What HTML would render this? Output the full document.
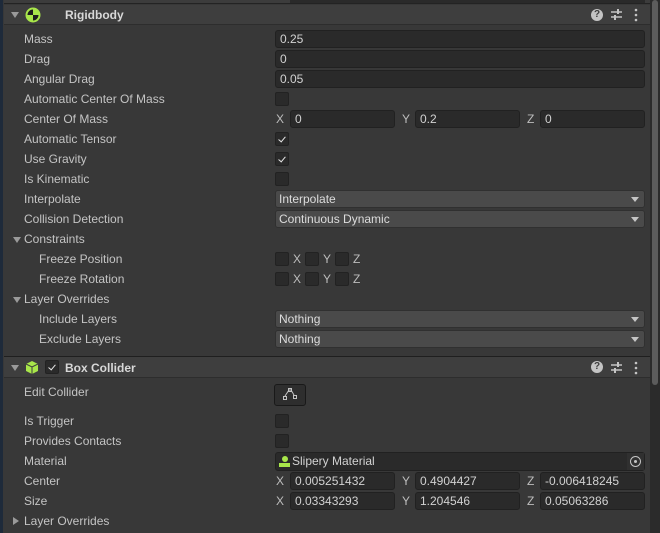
<!DOCTYPE html><html><head><style>
*{box-sizing:border-box;margin:0;padding:0}
body{width:660px;height:533px;background:#383838;font-family:"Liberation Sans",sans-serif;font-size:12px;color:#c4c4c4;position:relative;overflow:hidden}
.a{position:absolute}
.lbl{position:absolute;left:24px;height:20px;line-height:20px;white-space:nowrap}
.f{position:absolute;background:#2a2a2a;border:1px solid #212121;border-radius:3px;height:18px;line-height:16px;padding-left:4px;color:#d2d2d2;white-space:nowrap;overflow:hidden}
.dd{position:absolute;background:#4a4a4a;border:1px solid #303030;border-radius:3px;height:18px;line-height:16px;padding-left:3px;color:#dcdcdc;left:275px;width:370px}
.dd:after{content:"";position:absolute;right:5px;top:6px;border-left:4px solid transparent;border-right:4px solid transparent;border-top:5px solid #c4c4c4}
.cb{position:absolute;width:14px;height:14px;background:#2a2a2a;border:1px solid #222;border-radius:2px}
.ck:after{content:"";position:absolute;left:4px;top:2px;width:3px;height:6px;border-right:1.5px solid #e8e8e8;border-bottom:1.5px solid #e8e8e8;transform:rotate(40deg)}
.hd{position:absolute;left:4px;right:10px;height:20px;background:#3e3e3e;border-bottom:1px solid #2d2d2d}
.tri{position:absolute;width:0;height:0;border-left:4px solid transparent;border-right:4px solid transparent;border-top:6px solid #9a9a9a}
.xl{position:absolute;color:#bdbdbd;height:20px;line-height:20px}
</style></head><body>
<div class="a" style="left:0;top:0;width:3px;height:533px;background:#1e2a3a"></div>
<div class="a" style="left:650px;top:0;width:10px;height:533px;background:#2b2b2b"></div>
<div class="a" style="left:652px;top:0;width:6px;height:385px;background:#5c5c5c;border-radius:3px"></div>
<div class="a" style="left:4px;top:0;width:646px;height:4px;background:#3c3c3c;border-bottom:1px solid #232323"></div>
<div class="a" style="left:290px;top:0;width:355px;height:3px;background:#2a2a2a"></div>

<div class="hd" style="top:5px"></div>
<div class="tri" style="left:11px;top:12px"></div>
<svg class="a" style="left:25px;top:7px" width="16" height="16" viewBox="0 0 16 16"><circle cx="8" cy="8" r="6.5" fill="#1e1e1e" stroke="#a8e64a" stroke-width="2"/><path d="M8 2A6 6 0 0 1 14 8H8Z M8 8V14A6 6 0 0 1 2 8Z" fill="#a8e64a"/></svg>
<div class="a" style="left:65px;top:5px;line-height:20px;font-weight:bold;color:#d8d8d8">Rigidbody</div>
<div class="a" style="left:591px;top:9px;width:12px;height:12px;border-radius:6px;background:#c4c4c4;color:#3e3e3e;font-size:10px;font-weight:bold;text-align:center;line-height:12px">?</div>
<svg class="a" style="left:610px;top:8px" width="13" height="13"><path d="M1 4H12M1 9H12" stroke="#c4c4c4" stroke-width="1.5"/><path d="M8 1V6M5 7V12" stroke="#c4c4c4" stroke-width="2"/></svg>
<svg class="a" style="left:634px;top:8px" width="4" height="14"><circle cx="2" cy="2" r="1.3" fill="#c4c4c4"/><circle cx="2" cy="7" r="1.3" fill="#c4c4c4"/><circle cx="2" cy="12" r="1.3" fill="#c4c4c4"/></svg>

<div class="lbl" style="top:29px">Mass</div><div class="f" style="top:30px;left:275px;width:370px">0.25</div>
<div class="lbl" style="top:49px">Drag</div><div class="f" style="top:50px;left:275px;width:370px">0</div>
<div class="lbl" style="top:69px">Angular Drag</div><div class="f" style="top:70px;left:275px;width:370px">0.05</div>
<div class="lbl" style="top:89px">Automatic Center Of Mass</div><div class="cb" style="left:275px;top:92px"></div>
<div class="lbl" style="top:109px">Center Of Mass</div>
<div class="xl" style="left:276px;top:109px">X</div><div class="f" style="top:110px;left:290px;width:105px">0</div>
<div class="xl" style="left:402px;top:109px">Y</div><div class="f" style="top:110px;left:415px;width:105px">0.2</div>
<div class="xl" style="left:527px;top:109px">Z</div><div class="f" style="top:110px;left:540px;width:105px">0</div>
<div class="lbl" style="top:129px">Automatic Tensor</div><div class="cb ck" style="left:275px;top:132px"></div>
<div class="lbl" style="top:149px">Use Gravity</div><div class="cb ck" style="left:275px;top:152px"></div>
<div class="lbl" style="top:169px">Is Kinematic</div><div class="cb" style="left:275px;top:172px"></div>
<div class="lbl" style="top:189px">Interpolate</div><div class="dd" style="top:190px">Interpolate</div>
<div class="lbl" style="top:209px">Collision Detection</div><div class="dd" style="top:210px">Continuous Dynamic</div>
<div class="tri" style="left:13px;top:237px"></div><div class="lbl" style="top:229px">Constraints</div>
<div class="lbl" style="top:249px;left:39px">Freeze Position</div>
<div class="cb" style="left:275px;top:252px"></div><div class="xl" style="left:293px;top:249px">X</div>
<div class="cb" style="left:305px;top:252px"></div><div class="xl" style="left:323px;top:249px">Y</div>
<div class="cb" style="left:335px;top:252px"></div><div class="xl" style="left:353px;top:249px">Z</div>
<div class="lbl" style="top:269px;left:39px">Freeze Rotation</div>
<div class="cb" style="left:275px;top:272px"></div><div class="xl" style="left:293px;top:269px">X</div>
<div class="cb" style="left:305px;top:272px"></div><div class="xl" style="left:323px;top:269px">Y</div>
<div class="cb" style="left:335px;top:272px"></div><div class="xl" style="left:353px;top:269px">Z</div>
<div class="tri" style="left:13px;top:297px"></div><div class="lbl" style="top:289px">Layer Overrides</div>
<div class="lbl" style="top:309px;left:39px">Include Layers</div><div class="dd" style="top:310px">Nothing</div>
<div class="lbl" style="top:329px;left:39px">Exclude Layers</div><div class="dd" style="top:330px">Nothing</div>

<div class="a" style="left:4px;top:356px;width:646px;height:1px;background:#1f1f1f"></div>
<div class="hd" style="top:357px;height:21px"></div>
<div class="tri" style="left:11px;top:365px"></div>
<svg class="a" style="left:25px;top:360px" width="14" height="15" viewBox="0 0 14 15"><path d="M7 1L13 4V11L7 14L1 11V4Z" fill="#a8e64a"/><path d="M1 4L7 7L13 4M7 7V14" stroke="#3e3e3e" stroke-width="1" fill="none"/></svg>
<div class="cb ck" style="left:45px;top:360px"></div>
<div class="a" style="left:65px;top:358px;line-height:20px;font-weight:bold;color:#d8d8d8">Box Collider</div>
<div class="a" style="left:591px;top:361px;width:12px;height:12px;border-radius:6px;background:#c4c4c4;color:#3e3e3e;font-size:10px;font-weight:bold;text-align:center;line-height:12px">?</div>
<svg class="a" style="left:610px;top:361px" width="13" height="13"><path d="M1 4H12M1 9H12" stroke="#c4c4c4" stroke-width="1.5"/><path d="M8 1V6M5 7V12" stroke="#c4c4c4" stroke-width="2"/></svg>
<svg class="a" style="left:634px;top:361px" width="4" height="14"><circle cx="2" cy="2" r="1.3" fill="#c4c4c4"/><circle cx="2" cy="7" r="1.3" fill="#c4c4c4"/><circle cx="2" cy="12" r="1.3" fill="#c4c4c4"/></svg>

<div class="lbl" style="top:382px">Edit Collider</div>
<div class="a" style="left:274px;top:384px;width:32px;height:22px;background:#2e2e2e;border:1px solid #191919;border-radius:3px"></div>
<svg class="a" style="left:282px;top:387px" width="16" height="14"><path d="M3 9L7 3L9 3L12 8" stroke="#c4c4c4" fill="none"/><rect x="1.5" y="9.5" width="3" height="3" fill="none" stroke="#c4c4c4"/><rect x="6.5" y="1.5" width="3" height="3" fill="none" stroke="#c4c4c4"/><rect x="11.5" y="8.5" width="3" height="3" fill="none" stroke="#c4c4c4"/></svg>
<div class="lbl" style="top:411px">Is Trigger</div><div class="cb" style="left:275px;top:414px"></div>
<div class="lbl" style="top:431px">Provides Contacts</div><div class="cb" style="left:275px;top:434px"></div>
<div class="lbl" style="top:451px">Material</div>
<div class="f" style="top:452px;left:275px;width:370px;padding-left:16px;height:19px">Slipery Material</div>
<svg class="a" style="left:279px;top:455px" width="12" height="12"><rect x="0" y="8" width="11" height="4" fill="#a8e64a"/><circle cx="6" cy="4" r="3" fill="#a8e64a"/></svg>
<div class="a" style="left:627px;top:453px;width:17px;height:17px;background:#303030"></div>
<div class="a" style="left:630px;top:456px;width:11px;height:11px;border:1.5px solid #c4c4c4;border-radius:6px"></div>
<div class="a" style="left:634px;top:460px;width:3px;height:3px;background:#c4c4c4;border-radius:2px"></div>
<div class="lbl" style="top:471px">Center</div>
<div class="xl" style="left:276px;top:471px">X</div><div class="f" style="top:472px;left:290px;width:105px">0.005251432</div>
<div class="xl" style="left:402px;top:471px">Y</div><div class="f" style="top:472px;left:415px;width:105px">0.4904427</div>
<div class="xl" style="left:527px;top:471px">Z</div><div class="f" style="top:472px;left:540px;width:105px">-0.006418245</div>
<div class="lbl" style="top:491px">Size</div>
<div class="xl" style="left:276px;top:491px">X</div><div class="f" style="top:492px;left:290px;width:105px">0.03343293</div>
<div class="xl" style="left:402px;top:491px">Y</div><div class="f" style="top:492px;left:415px;width:105px">1.204546</div>
<div class="xl" style="left:527px;top:491px">Z</div><div class="f" style="top:492px;left:540px;width:105px">0.05063286</div>
<div class="a" style="left:13px;top:517px;border-top:4px solid transparent;border-bottom:4px solid transparent;border-left:6px solid #9a9a9a"></div>
<div class="lbl" style="top:511px">Layer Overrides</div>
</body></html>
